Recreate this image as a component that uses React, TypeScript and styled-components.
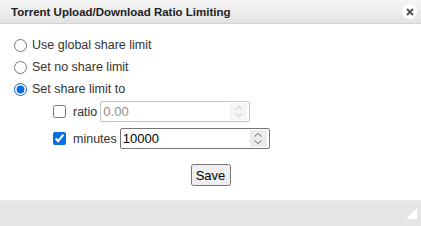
import React from 'react'
import styled, { createGlobalStyle } from 'styled-components'

const GlobalStyle = createGlobalStyle`
  html, body {
    margin: 0;
    padding: 0;
    background: #ffffff;
  }
  body {
    font-family: "Liberation Sans", Arial, sans-serif;
  }
`;

const Window = styled.div`
  position: relative;
  width: 421px;
  height: 226px;
  display: flex;
  flex-direction: column;
  background: #ffffff;
  overflow: hidden;
`;

const TitleBar = styled.div`
  height: 24px;
  flex: none;
  display: flex;
  align-items: center;
  justify-content: space-between;
  padding: 0 4px 0 11px;
  box-sizing: border-box;
  background: linear-gradient(#f5f5f5, #e3e3e3);
  border-bottom: 1px solid #d4d4d4;
`;

const Title = styled.h3`
  margin: 0;
  font-size: 11.5px;
  font-weight: bold;
  color: #222222;
`;

const CloseButton = styled.button`
  width: 15px;
  height: 15px;
  border: none;
  border-radius: 50%;
  background: #ffffff;
  padding: 0;
  display: flex;
  align-items: center;
  justify-content: center;
  cursor: pointer;
`;

const Content = styled.form`
  flex: 1;
  padding: 10px 0 0 14px;
  font-size: 12.5px;
  color: #333333;
  accent-color: #0a6cde;
`;

const RadioRow = styled.label`
  height: 22px;
  display: flex;
  align-items: center;
  gap: 5px;
  input {
    margin: 0;
    width: 13px;
    height: 13px;
  }
`;

const Limits = styled.div`
  display: flex;
  flex-direction: column;
  gap: 4px;
  padding: 0 0 0 39px;
`;

const CheckRow = styled.div`
  height: 23px;
  display: flex;
  align-items: center;
  label {
    display: flex;
    align-items: center;
    gap: 7px;
    margin-right: 3px;
  }
  input[type='checkbox'] {
    margin: 0;
    width: 13px;
    height: 13px;
  }
`;

const NumberBox = styled.div<{ $disabled?: boolean }>`
  width: 150px;
  height: 21px;
  box-sizing: border-box;
  display: flex;
  align-items: center;
  padding: 1px 2px 1px 0;
  background: #ffffff;
  border: 1px solid ${p => (p.$disabled ? '#c4c4c4' : '#767676')};
  border-radius: 2px;
`;

const NumberInput = styled.input`
  flex: 1;
  min-width: 0;
  border: none;
  outline: none;
  background: transparent;
  font-family: "Liberation Sans", Arial, sans-serif;
  font-size: 13px;
  padding: 0 0 0 2px;
  margin: 0;
  color: #000000;
  &:disabled {
    color: #8d8d8d;
  }
`;

const Spinner = styled.span<{ $disabled?: boolean }>`
  width: 17px;
  height: 17px;
  flex: none;
  display: flex;
  flex-direction: column;
  align-items: center;
  justify-content: center;
  gap: 3px;
  background: ${p => (p.$disabled ? '#f4f4f4' : '#ebebeb')};
  color: ${p => (p.$disabled ? '#c6c6c6' : '#6b6b6b')};
`;

const ButtonRow = styled.div`
  display: flex;
  justify-content: center;
  margin: 14px 0 0 -14px;
`;

const SaveButton = styled.button`
  width: 40px;
  height: 22px;
  font-family: "Liberation Sans", Arial, sans-serif;
  font-size: 13px;
  padding: 0;
`;

const Footer = styled.div`
  height: 26px;
  flex: none;
  background: #e5e5e5;
  border-top: 1px solid #ececec;
  box-sizing: border-box;
`;

const ResizeGrip = styled.svg`
  position: absolute;
  right: 4px;
  bottom: 7px;
`;

const SpinArrows = ({ disabled }: { disabled?: boolean }) => (
  <Spinner $disabled={disabled}>
    <svg width="8" height="4" viewBox="0 0 8 4">
      <path d="M0.5 3.5 L4 0.5 L7.5 3.5" fill="none" stroke="currentColor" strokeWidth="1" />
    </svg>
    <svg width="8" height="4" viewBox="0 0 8 4">
      <path d="M0.5 0.5 L4 3.5 L7.5 0.5" fill="none" stroke="currentColor" strokeWidth="1" />
    </svg>
  </Spinner>
)

const App = () => {
  return (
    <>
      <GlobalStyle />
      <Window>
        <TitleBar>
          <Title>Torrent Upload/Download Ratio Limiting</Title>
          <CloseButton type="button" aria-label="Close">
            <svg width="8" height="8" viewBox="0 0 8 8">
              <path d="M1 1 L7 7 M7 1 L1 7" stroke="#555555" strokeWidth="2" />
            </svg>
          </CloseButton>
        </TitleBar>
        <Content onSubmit={e => e.preventDefault()}>
          <RadioRow>
            <input type="radio" name="limit" />
            Use global share limit
          </RadioRow>
          <RadioRow>
            <input type="radio" name="limit" />
            Set no share limit
          </RadioRow>
          <RadioRow>
            <input type="radio" name="limit" defaultChecked />
            Set share limit to
          </RadioRow>
          <Limits>
            <CheckRow>
              <label>
                <input type="checkbox" />
                ratio
              </label>
              <NumberBox $disabled>
                <NumberInput type="text" inputMode="decimal" defaultValue="0.00" disabled />
                <SpinArrows disabled />
              </NumberBox>
            </CheckRow>
            <CheckRow>
              <label>
                <input type="checkbox" defaultChecked />
                minutes
              </label>
              <NumberBox>
                <NumberInput type="text" inputMode="numeric" defaultValue="10000" />
                <SpinArrows />
              </NumberBox>
            </CheckRow>
          </Limits>
          <ButtonRow>
            <SaveButton type="submit">Save</SaveButton>
          </ButtonRow>
        </Content>
        <Footer />
        <ResizeGrip width="11" height="11" viewBox="0 0 11 11">
          <path d="M11 0 L11 11 L0 11 Z" fill="#ffffff" />
        </ResizeGrip>
      </Window>
    </>
  )
}

export default App
